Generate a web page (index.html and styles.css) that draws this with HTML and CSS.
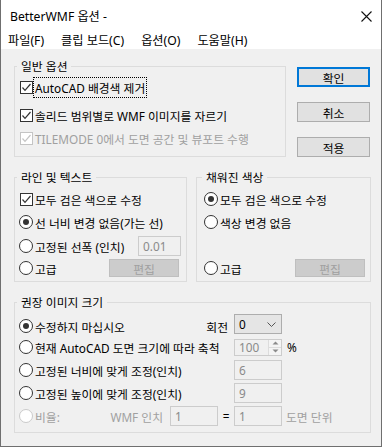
FILE: index.html
```html
<!DOCTYPE html>
<html lang="ko">
<head>
<meta charset="utf-8">
<link rel="stylesheet" href="styles.css">
</head>
<body>
<div class="window">
  <div class="titlebar">
    <span class="title">BetterWMF 옵션 -</span>
    <svg class="close" viewBox="0 0 11 11"><path d="M0.5 0.5 L10.5 10.5 M10.5 0.5 L0.5 10.5" stroke="#111" stroke-width="1.1" fill="none"/></svg>
  </div>
  <div class="menubar">
    <span>파일(F)</span><span>클립 보드(C)</span><span>옵션(O)</span><span>도움말(H)</span>
  </div>
  <div class="content">
    <div class="top-row">
      <div class="group g1">
        <div class="legend">일반 옵션</div>
        <div class="row m3">
          <svg class="check" viewBox="0 0 13 13"><rect x="0.5" y="0.5" width="12" height="12" fill="#fff" stroke="#333"/><polyline points="2.5,6.5 5,9.3 10.5,3" fill="none" stroke="#333" stroke-width="1.2"/></svg>
          <span class="label focus">AutoCAD 배경색 제거</span>
        </div>
        <div class="row m8">
          <svg class="check" viewBox="0 0 13 13"><rect x="0.5" y="0.5" width="12" height="12" fill="#fff" stroke="#333"/><polyline points="2.5,6.5 5,9.3 10.5,3" fill="none" stroke="#333" stroke-width="1.2"/></svg>
          <span class="label">솔리드 범위별로 WMF 이미지를 자르기</span>
        </div>
        <div class="row m3 disabled">
          <svg class="check" viewBox="0 0 13 13"><rect x="0.5" y="0.5" width="12" height="12" fill="#fff" stroke="#c4c4c4"/><polyline points="2.5,6.5 5,9.3 10.5,3" fill="none" stroke="#c4c4c4" stroke-width="1.2"/></svg>
          <span class="label">TILEMODE 0에서 도면 공간 및 뷰포트 수행</span>
        </div>
      </div>
      <div class="buttons">
        <div class="btn default">확인</div>
        <div class="btn">취소</div>
        <div class="btn">적용</div>
      </div>
    </div>

    <div class="mid-row">
      <div class="group g2">
        <div class="legend">라인 및 텍스트</div>
        <div class="row m4">
          <svg class="check" viewBox="0 0 13 13"><rect x="0.5" y="0.5" width="12" height="12" fill="#fff" stroke="#333"/><polyline points="2.5,6.5 5,9.3 10.5,3" fill="none" stroke="#333" stroke-width="1.2"/></svg>
          <span class="label">모두 검은 색으로 수정</span>
        </div>
        <div class="row m3">
          <span class="radio on"></span>
          <span class="label">선 너비 변경 없음(가는 선)</span>
        </div>
        <div class="row m4">
          <span class="radio"></span>
          <span class="label">고정된 선폭 (인치)</span>
          <span class="field w43 push">0.01</span>
        </div>
        <div class="row m2">
          <span class="radio"></span>
          <span class="label">고급</span>
          <span class="btn dis push edit2">편집</span>
        </div>
      </div>
      <div class="group g3">
        <div class="legend">채워진 색상</div>
        <div class="row m4">
          <span class="radio on"></span>
          <span class="label">모두 검은 색으로 수정</span>
        </div>
        <div class="row m3">
          <span class="radio"></span>
          <span class="label">색상 변경 없음</span>
        </div>
        <div class="row m26">
          <span class="radio"></span>
          <span class="label">고급</span>
          <span class="btn dis push edit3">편집</span>
        </div>
      </div>
    </div>

    <div class="group g4">
      <div class="legend">권장 이미지 크기</div>
      <div class="row m6">
        <div class="lhs">
          <span class="radio on"></span>
          <span class="label">수정하지 마십시오</span>
          <span class="push rot">회전</span>
        </div>
        <div class="combo"><span>0</span><svg class="chev" viewBox="0 0 9 5"><polyline points="0.5,0.5 4.5,4.5 8.5,0.5" fill="none" stroke="#555" stroke-width="1"/></svg></div>
      </div>
      <div class="row m1">
        <div class="lhs">
          <span class="radio"></span>
          <span class="label">현재 AutoCAD 도면 크기에 따라 축척</span>
        </div>
        <div class="field spin"><span class="val">100</span>
          <span class="spinbtns">
            <span class="sb"><svg viewBox="0 0 7 4"><polygon points="0.5,3.5 3.5,0.5 6.5,3.5" fill="#8a8a8a"/></svg></span>
            <span class="sb"><svg viewBox="0 0 7 4"><polygon points="0.5,0.5 3.5,3.5 6.5,0.5" fill="#8a8a8a"/></svg></span>
          </span>
        </div>
        <span class="pct">%</span>
      </div>
      <div class="row m3">
        <div class="lhs">
          <span class="radio"></span>
          <span class="label">고정된 너비에 맞게 조정(인치)</span>
        </div>
        <span class="field w48">6</span>
      </div>
      <div class="row m3">
        <div class="lhs">
          <span class="radio"></span>
          <span class="label">고정된 높이에 맞게 조정(인치)</span>
        </div>
        <span class="field w48">9</span>
      </div>
      <div class="row m3 disabled">
        <div class="lhs">
          <span class="radio off"></span>
          <span class="label">비율:</span>
          <span class="push wmf">WMF 인치</span>
          <span class="field w48">1</span>
          <span class="eq">=</span>
        </div>
        <span class="field w48">1</span>
        <span class="unit">도면 단위</span>
      </div>
    </div>
  </div>
</div>
</body>
</html>
```

FILE: styles.css
```css
* { box-sizing: border-box; }
html, body { margin: 0; padding: 0; }
body {
  width: 382px;
  height: 447px;
  overflow: hidden;
  font-family: "Noto Sans", "Noto Sans CJK KR", sans-serif;
  font-size: 11.8px;
  color: #000;
  background: #f0f0f0;
}
.window {
  width: 382px;
  height: 447px;
  border: 1px solid #6f6f6f;
  border-top: none;
  background: #f0f0f0;
  display: flex;
  flex-direction: column;
}
.titlebar {
  height: 30px;
  background: #fff;
  display: flex;
  align-items: center;
  padding: 2px 0 0 9px;
  font-size: 12.2px;
}
.title { flex: 1; }
.close { width: 11px; height: 11px; margin-right: 9px; }
.menubar {
  height: 19px;
  background: #fff;
  display: flex;
  align-items: center;
  gap: 17px;
  padding: 1px 0 0 7px;
  font-size: 12.2px;
}
.content {
  padding: 17px 10px 0 13px;
  display: flex;
  flex-direction: column;
}
.top-row { display: flex; gap: 11px; }
.group {
  border: 1px solid #dcdcdc;
  display: flex;
  flex-direction: column;
  padding: 0 5px;
}
.g1 { width: 272px; height: 91px; }
.mid-row { display: flex; gap: 9px; margin-top: 20px; }
.g2 { width: 173px; height: 105px; }
.g3 { width: 175px; height: 105px; padding-left: 8px; }
.g4 { width: 357px; height: 131px; margin-top: 20px; }
.legend {
  align-self: flex-start;
  height: 16px;
  line-height: 16px;
  margin: -9px 0 0 -3px;
  padding: 0 4px;
  background: #f0f0f0;
}
.row { display: flex; align-items: center; height: 20px; }
.m1 { margin-top: 1px; }
.m2 { margin-top: 2px; }
.m3 { margin-top: 3px; }
.m4 { margin-top: 4px; }
.m6 { margin-top: 6px; }
.m8 { margin-top: 8px; }
.m26 { margin-top: 26px; }
.check { width: 13px; height: 13px; flex: none; }
.radio {
  width: 14px;
  height: 14px;
  flex: none;
  margin-left: -1px;
  border-radius: 50%;
  border: 1px solid #333;
  background: #fff;
  display: flex;
  align-items: center;
  justify-content: center;
}
.radio.on::after {
  content: "";
  width: 6px;
  height: 6px;
  border-radius: 50%;
  background: #333;
}
.radio.off { border-color: #cacaca; }
.label { margin-left: 2px; white-space: nowrap; }
.focus { outline: 1px dotted #000; outline-offset: 0; padding: 1px 1px 1px 1px; margin-left: 1px; }
.disabled .label, .disabled .wmf, .disabled .eq, .disabled .unit { color: #a0a0a0; }
.push { margin-left: auto; }
.buttons {
  display: flex;
  flex-direction: column;
  gap: 15px;
  padding-top: 1px;
}
.btn {
  width: 73px;
  height: 20px;
  border: 1px solid #adadad;
  background: #e1e1e1;
  display: flex;
  align-items: center;
  justify-content: center;
}
.btn.default { border: 2px solid #0078d7; }
.btn.dis {
  width: 70px;
  height: 18px;
  background: #cccccc;
  border-color: #bfbfbf;
  color: #a0a0a0;
}
.edit2 { margin-right: 2px; }
.edit3 { margin-right: 0px; }
.field {
  height: 20px;
  border: 1px solid #cccccc;
  background: #f0f0f0;
  color: #8a8a8a;
  display: flex;
  align-items: center;
  padding-left: 4px;
  flex: none;
}
.w43 { width: 43px; }
.w48 { width: 48px; }
.lhs { width: 214px; display: flex; align-items: center; height: 20px; }
.rot { margin-right: 6px; }
.combo {
  width: 48px;
  height: 20px;
  margin-top: -4px;
  border: 1px solid #adadad;
  background: #e5e5e5;
  display: flex;
  align-items: center;
  justify-content: space-between;
  padding: 0 5px 0 4px;
}
.chev { width: 9px; height: 5px; }
.spin { width: 48px; height: 17px; padding-right: 0; }
.spin .val { flex: 1; }
.spinbtns {
  width: 13px;
  height: 15px;
  display: flex;
  flex-direction: column;
  border-left: 1px solid #dcdcdc;
}
.sb {
  flex: 1;
  display: flex;
  align-items: center;
  justify-content: center;
  background: #f4f4f4;
}
.sb + .sb { border-top: 1px solid #dcdcdc; }
.sb svg { width: 7px; height: 4px; }
.pct { margin-left: 5px; }
.wmf { margin-right: 7px; }
.eq { width: 16px; text-align: center; color: #000 !important; }
.unit { margin-left: 4px; }
```
